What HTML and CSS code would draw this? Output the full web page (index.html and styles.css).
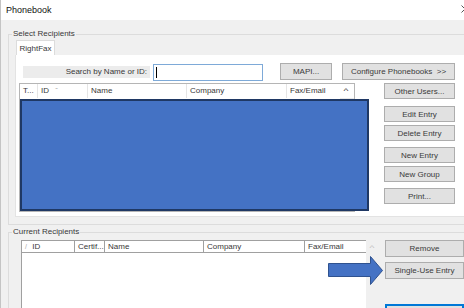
FILE: index.html
```html
<!DOCTYPE html>
<html lang="en">
<head>
    <meta charset="UTF-8">
    <title>Phonebook</title>
    <link rel="stylesheet" href="styles.css">
</head>
<body>
<div class="titlebar">
    <span class="title">Phonebook</span>
    <svg class="close" width="8" height="8" viewBox="0 0 8 8"><path d="M0.5 0.5 L7.5 7.5 M7.5 0.5 L0.5 7.5" stroke="#555" stroke-width="1"/></svg>
</div>

<!-- Select Recipients -->
<div class="group group-select">
    <div class="legend">Select Recipients</div>
    <div class="tabs"><div class="tab">RightFax</div></div>
    <div class="panel">
        <div class="search-row">
            <div class="search-label">Search by Name or ID:</div>
            <div class="search-input"><span class="caret"></span></div>
            <button class="btn btn-mapi">MAPI...</button>
            <button class="btn btn-configure">Configure Phonebooks &nbsp;&gt;&gt;</button>
        </div>
        <div class="list-row">
            <div class="list pb-list">
                <div class="list-head">
                    <div class="col c-type">T...</div>
                    <div class="col c-id">ID <span class="sort">ˇ</span></div>
                    <div class="col c-name">Name</div>
                    <div class="col c-company">Company</div>
                    <div class="col c-fax">Fax/Email</div>
                    <div class="col c-scroll"><span class="arrow-up">^</span></div>
                </div>
                <div class="list-body">
                    <div class="scroll-track"></div>
                </div>
                <div class="highlight"></div>
            </div>
            <div class="side-buttons">
                <button class="btn">Other Users...</button>
                <button class="btn gap-big">Edit Entry</button>
                <button class="btn gap-small">Delete Entry</button>
                <button class="btn gap-mid">New Entry</button>
                <button class="btn gap-small">New Group</button>
                <button class="btn gap-mid">Print...</button>
            </div>
        </div>
    </div>
</div>

<!-- Current Recipients -->
<div class="group group-current">
    <div class="legend">Current Recipients</div>
    <div class="list-row current-row">
        <div class="list cr-list">
            <div class="list-head cr-head">
                <div class="col k-id"><span class="sort-up">/</span> ID</div>
                <div class="col k-cert">Certif...</div>
                <div class="col k-name">Name</div>
                <div class="col k-company">Company</div>
                <div class="col k-fax">Fax/Email</div>
            </div>
        </div>
        <div class="cr-scroll"><span class="arrow-up light">^</span></div>
        <div class="side-buttons cr-buttons">
            <button class="btn">Remove</button>
            <button class="btn gap-single">Single-Use Entry</button>
            <button class="btn btn-default"></button>
        </div>
    </div>
</div>

<svg class="pointer" width="56" height="32" viewBox="0 0 56 32">
    <path d="M0.5 8.5 H42.5 V1.5 L54.5 15.5 L42.5 29.5 V21.5 H0.5 Z" fill="#4472c4" stroke="#2f528f" stroke-width="1"/>
</svg>
</body>
</html>
```

FILE: styles.css
```css
* {
    margin: 0;
    padding: 0;
    box-sizing: border-box;
}

body {
    position: relative;
    width: 464px;
    height: 308px;
    overflow: hidden;
    background: #f0f0f0;
    border-left: 1px solid #c4c4c4;
    font-family: "Liberation Sans", Arial, sans-serif;
    font-size: 8px;
    color: #383838;
}

.titlebar {
    height: 20px;
    background: #fff;
    display: flex;
    align-items: center;
    justify-content: space-between;
    padding-left: 5px;
}

.title {
    font-size: 9px;
    color: #111;
}

.close {
    margin-right: -5px;
    margin-top: -2px;
}

.group {
    margin-left: 7px;
    border: 1px solid #dcdcdc;
    border-right: none;
}

.group-select {
    margin-top: 14px;
    padding-bottom: 7px;
}

.group-current {
    margin-top: 7px;
    border-bottom: none;
    height: 80px;
}

.legend {
    width: fit-content;
    height: 12px;
    line-height: 12px;
    margin: -7px 0 0 3px;
    padding: 0 1px;
    background: #f0f0f0;
}

.tabs {
    display: flex;
    padding-left: 7px;
}

.tab {
    width: 39px;
    height: 15px;
    line-height: 15px;
    text-align: center;
    background: #fff;
    border: 1px solid #dcdcdc;
    border-bottom: none;
}

.panel {
    margin-left: 6px;
    height: 162px;
    background: #fff;
    border: 1px solid #e3e3e3;
    border-right: none;
    border-top: none;
}

.search-row {
    display: flex;
    align-items: flex-start;
    height: 25px;
    padding-top: 8px;
}

.search-label {
    margin: 3px 0 0 7px;
    width: 127px;
    height: 12px;
    line-height: 12px;
    padding-right: 3px;
    text-align: right;
    background: #ececec;
}

.search-input {
    margin: 1px 0 0 3px;
    width: 110px;
    height: 17px;
    border: 1px solid #7eaad8;
    background: #fff;
    padding: 2px 0 0 2px;
}

.caret {
    display: block;
    width: 1px;
    height: 11px;
    background: #000;
}

.btn {
    display: block;
    height: 17px;
    background: #e1e1e1;
    border: 1px solid #adadad;
    font-family: inherit;
    font-size: 8px;
    color: #3a3a3a;
}

.btn-mapi {
    margin-left: 17px;
    width: 52px;
}

.btn-configure {
    margin-left: 10px;
    width: 113px;
}

.list-row {
    display: flex;
    align-items: flex-start;
    margin-top: 3px;
}

.list {
    position: relative;
    background: #fff;
    border: 1px solid #b5b5b5;
}

.pb-list {
    margin-left: 3px;
    width: 336px;
    height: 129px;
}

.list-head {
    display: flex;
    height: 14px;
    line-height: 14px;
}

.col {
    padding-left: 3px;
    border-right: 1px solid #e5e5e5;
    white-space: nowrap;
    overflow: hidden;
}

.c-type { width: 18px; }
.c-id { width: 50px; }
.c-name { width: 99px; }
.c-company { width: 100px; }
.c-fax { width: 54px; border-right: none; }
.c-scroll { width: 13px; border-right: none; padding-left: 3px; }

.sort {
    color: #aaa;
    margin-left: 4px;
}

.arrow-up {
    display: inline-block;
    font-size: 8px;
    transform: scaleX(1.3);
    color: #333;
}

.arrow-up.light {
    color: #c0c0c0;
}

.list-body {
    display: flex;
    justify-content: flex-end;
    height: 113px;
}

.scroll-track {
    width: 14px;
    background: #e8e8e8;
}

.highlight {
    position: absolute;
    left: 0;
    top: 15px;
    width: 349px;
    height: 112px;
    background: #4472c4;
    border: 2px solid #1f3864;
}

.side-buttons {
    display: flex;
    flex-direction: column;
    margin-left: 29px;
    width: 71px;
}

.side-buttons .btn {
    width: 100%;
    height: 16px;
}

.gap-big { margin-top: 7px; }
.gap-small { margin-top: 3px; }
.gap-mid { margin-top: 6px; }

.current-row {
    margin-top: 2px;
}

.cr-list {
    margin-left: 12px;
    width: 345px;
    height: 80px;
    border-color: #a0a0a0;
    border-right: none;
}

.cr-head {
    height: 12px;
    line-height: 11px;
    border-bottom: 1px solid #a0a0a0;
}

.cr-head .col {
    border-right: 1px solid #a0a0a0;
}

.k-id { width: 53px; }
.k-cert { width: 30px; }
.k-name { width: 99px; }
.k-company { width: 101px; }
.k-fax { width: 61px; border-right: none !important; }

.sort-up {
    color: #aaa;
    font-size: 7px;
    margin-right: 3px;
}

.cr-scroll {
    width: 16px;
    height: 80px;
    padding: 3px 0 0 4px;
    background: #f0f0f0;
}

.cr-buttons {
    margin-left: 3px;
    width: 79px;
}

.cr-buttons .btn {
    height: 17px;
}

.gap-single { margin-top: 5px; }

.cr-buttons .btn-default {
    margin-top: 25px;
    border: 2px solid #0078d7;
}

.pointer {
    position: absolute;
    left: 327px;
    top: 255px;
}
```
